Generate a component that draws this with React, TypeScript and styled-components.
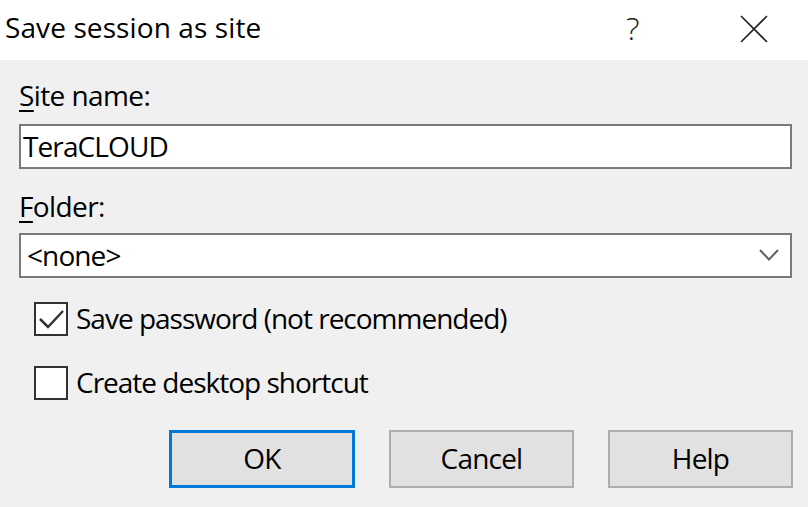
import React from "react";
import styled, { createGlobalStyle } from "styled-components";

const Global = createGlobalStyle`
  html, body { margin: 0; padding: 0; background: #f0f0f0; overflow: hidden; }
  * { box-sizing: border-box; }
`;

const FONT = `"Open Sans", "Noto Sans", "Liberation Sans", sans-serif`;

const Dialog = styled.div`
  width: 808px;
  height: 507px;
  background: #f0f0f0;
  font-family: ${FONT};
  color: #000;
  display: flex;
  flex-direction: column;
`;

const TitleBar = styled.div`
  height: 60px;
  background: #fff;
  display: flex;
  align-items: center;
  padding-left: 5px;
`;

const Title = styled.div`
  flex: 1;
  font-size: 28px;
  letter-spacing: 0.1px;
  line-height: 1;
  padding-bottom: 6px;
`;

const HelpGlyph = styled.div`
  width: 18px;
  font-size: 32px;
  font-weight: 300;
  line-height: 1;
  margin-right: 96px;
  padding-bottom: 4px;
  color: #222;
`;

const CloseBox = styled.div`
  width: 28px;
  height: 28px;
  margin-right: 40px;
  margin-bottom: 2px;
`;

const Body = styled.div`
  padding: 17px 16px 0 19px;
  display: flex;
  flex-direction: column;
`;

const Label = styled.div<{ $mt?: number; $mb: number }>`
  font-size: 28px;
  line-height: 36px;
  letter-spacing: -0.6px;
  margin-top: ${(p) => p.$mt ?? 0}px;
  margin-bottom: ${(p) => p.$mb}px;
  u { text-decoration-thickness: 2px; text-underline-offset: 4px; }
`;

const Field = styled.div`
  height: 45px;
  width: 773px;
  background: #fff;
  border: 2px solid #7a7a7a;
  display: flex;
  align-items: center;
  padding-left: 2px;
  font-size: 28px;
  letter-spacing: -0.9px;
  padding-bottom: 2px;
`;

const SelectField = styled(Field)`
  padding-left: 6px;
  padding-right: 11px;
  justify-content: space-between;
`;

const CheckRow = styled.div<{ $mt: number }>`
  display: flex;
  align-items: center;
  margin-top: ${(p) => p.$mt}px;
  padding-left: 15px;
  height: 34px;
  gap: 8px;
  font-size: 28px;
  letter-spacing: -1px;
`;

const Box = styled.div`
  width: 34px;
  height: 34px;
  border: 2px solid #333;
  background: #fff;
  flex: none;
`;

const CheckText = styled.span`
  padding-bottom: 3px;
`;

const Buttons = styled.div`
  display: flex;
  justify-content: flex-end;
  gap: 34px;
  margin-top: 30px;
  margin-right: -1px;
`;

const Button = styled.div<{ $default?: boolean }>`
  width: ${(p) => (p.$default ? 186 : 185)}px;
  height: 58px;
  background: #e1e1e1;
  border: ${(p) => (p.$default ? "3px solid #0078d7" : "2px solid #adadad")};
  display: flex;
  align-items: center;
  justify-content: center;
  font-size: 28px;
  letter-spacing: -0.8px;
  padding-bottom: 3px;
`;

export default function App() {
  return (
    <Dialog>
      <Global />
      <TitleBar>
        <Title>Save session as site</Title>
        <HelpGlyph>?</HelpGlyph>
        <CloseBox>
          <svg width="28" height="28" viewBox="0 0 28 28">
            <path d="M1 1 L27 27 M27 1 L1 27" stroke="#222" strokeWidth="1.6" fill="none" />
          </svg>
        </CloseBox>
      </TitleBar>
      <Body>
        <Label $mb={11}>
          <u>S</u>ite name:
        </Label>
        <Field>TeraCLOUD</Field>
        <Label $mt={19} $mb={9}>
          <u>F</u>older:
        </Label>
        <SelectField>
          <span>&lt;none&gt;</span>
          <svg width="20" height="12" viewBox="0 0 20 12">
            <path d="M1 1 L10 10.5 L19 1" stroke="#606060" strokeWidth="2" fill="none" />
          </svg>
        </SelectField>
        <CheckRow $mt={24}>
          <Box>
            <svg width="30" height="30" viewBox="0 0 30 30">
              <path d="M4 15 L12 23 L27 7" stroke="#333" strokeWidth="2.5" fill="none" />
            </svg>
          </Box>
          <CheckText>Save password (not recommended)</CheckText>
        </CheckRow>
        <CheckRow $mt={30}>
          <Box />
          <CheckText>Create desktop shortcut</CheckText>
        </CheckRow>
        <Buttons>
          <Button $default>OK</Button>
          <Button>Cancel</Button>
          <Button>Help</Button>
        </Buttons>
      </Body>
    </Dialog>
  );
}
